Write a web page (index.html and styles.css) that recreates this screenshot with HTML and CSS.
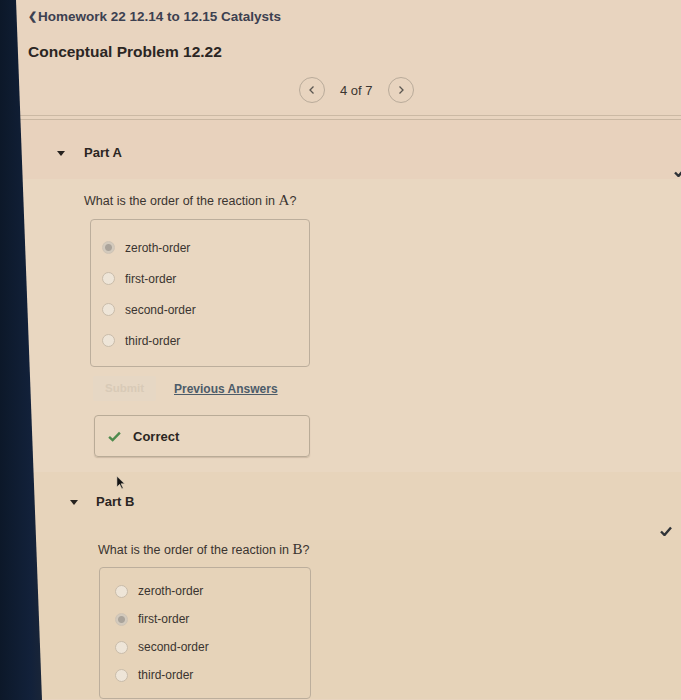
FILE: index.html
```html
<!DOCTYPE html>
<html lang="en">
<head>
<meta charset="utf-8">
<title>Conceptual Problem 12.22</title>
<link rel="stylesheet" href="styles.css">
</head>
<body>
<div class="screen">
  <header class="top">
    <div class="crumb"><span class="crumb-arrow">&#10094;</span>Homework 22 12.14 to 12.15 Catalysts</div>
    <h1 class="title">Conceptual Problem 12.22</h1>
    <nav class="pager">
      <span class="circle-btn"><svg viewBox="0 0 10 10" width="10" height="10"><path d="M6.5 1.5 L3 5 L6.5 8.5" fill="none" stroke="#5a5650" stroke-width="1.3"/></svg></span>
      <span class="pager-text">4 of 7</span>
      <span class="circle-btn"><svg viewBox="0 0 10 10" width="10" height="10"><path d="M3.5 1.5 L7 5 L3.5 8.5" fill="none" stroke="#5a5650" stroke-width="1.3"/></svg></span>
    </nav>
    <div class="divider"></div>
  </header>

  <section class="part part-a">
    <div class="part-head">
      <span class="caret"></span>
      <span class="part-name">Part A</span>
      <svg class="done" viewBox="0 0 12 10" width="12" height="10"><path d="M1 5.5 L4.5 9 L11 1.5" fill="none" stroke="#2f3338" stroke-width="2.4"/></svg>
    </div>
    <div class="part-body">
      <p class="question">What is the order of the reaction in <span class="math">A</span>?</p>
      <div class="choices">
        <label class="choice"><span class="radio checked"></span>zeroth-order</label>
        <label class="choice"><span class="radio"></span>first-order</label>
        <label class="choice"><span class="radio"></span>second-order</label>
        <label class="choice"><span class="radio"></span>third-order</label>
      </div>
      <div class="actions">
        <span class="submit">Submit</span>
        <a class="prev-link">Previous Answers</a>
      </div>
      <div class="feedback">
        <svg viewBox="0 0 14 11" width="13" height="11"><path d="M1.2 5.8 L5 9.4 L12.8 1.4" fill="none" stroke="#4d8a4c" stroke-width="2.6"/></svg>
        <span>Correct</span>
      </div>
      <svg class="cursor" viewBox="0 0 10 16" width="9" height="15"><path d="M1 1 L1 13 L4 10 L6.5 15 L8 14.3 L5.6 9.4 L9.5 9.4 Z" fill="#141414" stroke="#e8dcc8" stroke-width="0.6"/></svg>
    </div>
  </section>

  <section class="part part-b">
    <div class="part-head">
      <span class="caret"></span>
      <span class="part-name">Part B</span>
      <svg class="done" viewBox="0 0 12 10" width="12" height="10"><path d="M1 5.5 L4.5 9 L11 1.5" fill="none" stroke="#2f3338" stroke-width="2.4"/></svg>
    </div>
    <div class="part-body">
      <p class="question">What is the order of the reaction in <span class="math">B</span>?</p>
      <div class="choices">
        <label class="choice"><span class="radio"></span>zeroth-order</label>
        <label class="choice"><span class="radio checked"></span>first-order</label>
        <label class="choice"><span class="radio"></span>second-order</label>
        <label class="choice"><span class="radio"></span>third-order</label>
      </div>
    </div>
  </section>

  <div class="bezel"></div>
</div>
</body>
</html>
```

FILE: styles.css
```css
html, body {
  margin: 0;
  padding: 0;
}

body {
  font-family: "Liberation Sans", Arial, sans-serif;
  color: #2f2a26;
}

.screen {
  position: relative;
  width: 681px;
  height: 700px;
  overflow: hidden;
  background: #e8d4bf;
}

/* monitor bezel seen at the left edge of the photo */
.bezel {
  position: absolute;
  left: 0;
  top: 0;
  width: 44px;
  height: 700px;
  background: linear-gradient(90deg, #0c1829 0, #12213a 70%, #1b2638 100%);
  clip-path: polygon(0 0, 16px 0, 42px 100%, 0 100%);
}

/* header */
.top {
  padding-left: 28px;
}

.crumb {
  margin-top: 7px;
  line-height: 20px;
  font-size: 13.5px;
  font-weight: bold;
  color: #3c4050;
}

.crumb-arrow {
  font-size: 11px;
  margin-right: 1px;
  position: relative;
  top: -1px;
}

.title {
  margin: 14px 0 0;
  line-height: 22px;
  font-size: 15.5px;
  font-weight: bold;
  color: #2b2623;
}

.pager {
  display: flex;
  align-items: center;
  margin-top: 14px;
  margin-left: 271px;
  height: 26px;
}

.circle-btn {
  width: 24px;
  height: 24px;
  border: 1px solid #b9ab9a;
  border-radius: 50%;
  display: flex;
  align-items: center;
  justify-content: center;
}

.pager-text {
  font-size: 13px;
  color: #3a3531;
  margin: 0 15px 0 15px;
}

.divider {
  margin: 12px 0 0 -8px;
  height: 3px;
  border-top: 1px solid #cbb9a4;
  border-bottom: 1px solid #c9b7a2;
}

/* parts */
.part-head {
  display: flex;
  align-items: flex-start;
  box-sizing: border-box;
}

.caret {
  width: 0;
  height: 0;
  border-left: 4.5px solid transparent;
  border-right: 4.5px solid transparent;
  border-top: 5px solid #26221f;
  margin-top: 7px;
}

.part-name {
  font-size: 13px;
  font-weight: bold;
  line-height: 18px;
  color: #2b2623;
}

.done {
  margin-left: auto;
  align-self: flex-end;
}

.question {
  margin: 0;
  line-height: 18px;
  font-size: 12.5px;
  color: #3a3430;
}

.math {
  font-family: "Liberation Serif", "Times New Roman", serif;
  font-size: 15px;
}

.choices {
  border: 1px solid #bcae9c;
  border-radius: 4px;
  box-sizing: border-box;
}

.choice {
  display: flex;
  align-items: center;
  font-size: 12px;
  color: #3a3430;
}

.radio {
  width: 11px;
  height: 11px;
  border-radius: 50%;
  border: 1px solid #c9bcaa;
  background: #eee5d8;
  margin-right: 10px;
  flex-shrink: 0;
}

.radio.checked {
  background: radial-gradient(circle, #aaa39a 0 3px, #d3cabd 4px);
  border-color: #cfc4b5;
}

/* part A */
.part-a .part-head {
  height: 59px;
  padding: 24px 0 0 57px;
  background: #e8d2bd;
}

.part-a .caret {
  margin-right: 19px;
}

.part-a .done {
  margin-right: -5px;
  margin-bottom: 2px;
}

.part-a .part-body {
  position: relative;
  padding: 12px 0 15px 84px;
  background: #e9d7c1;
}

.part-a .choices {
  margin: 9px 0 0 6px;
  width: 220px;
  padding: 12px 0 10px 11px;
}

.part-a .choice {
  height: 31px;
}

.actions {
  display: flex;
  align-items: center;
  margin: 9px 0 0 9px;
}

.submit {
  width: 63px;
  height: 25px;
  line-height: 25px;
  text-align: center;
  font-size: 11.5px;
  font-weight: bold;
  color: #d8cab7;
  background: #e6d7c4;
  border-radius: 2px;
}

.prev-link {
  margin-left: 18px;
  font-size: 12px;
  font-weight: bold;
  color: #4d5c69;
  text-decoration: underline;
}

.feedback {
  display: flex;
  align-items: center;
  margin: 14px 0 0 10px;
  width: 216px;
  height: 42px;
  box-sizing: border-box;
  border: 1px solid #b9ab97;
  border-radius: 4px;
  box-shadow: 0 1px 1px rgba(120, 100, 80, 0.25);
  padding-left: 13px;
  font-size: 13px;
  font-weight: bold;
  color: #2b2623;
}

.feedback svg {
  margin-right: 12px;
}

.cursor {
  position: absolute;
  left: 116px;
  top: 296px;
}

/* part B */
.part-b .part-head {
  height: 68px;
  padding: 21px 0 0 70px;
  background: #e7d4bb;
}

.part-b .caret {
  margin-right: 18px;
}

.part-b .done {
  margin-right: 9px;
  margin-bottom: 4px;
}

.part-b .part-body {
  padding: 0 0 0 98px;
  background: #e6d3b9;
}

.part-b .choices {
  margin: 8px 0 0 1px;
  width: 212px;
  padding: 9px 0 9px 15px;
}

.part-b .choice {
  height: 28px;
}
```
